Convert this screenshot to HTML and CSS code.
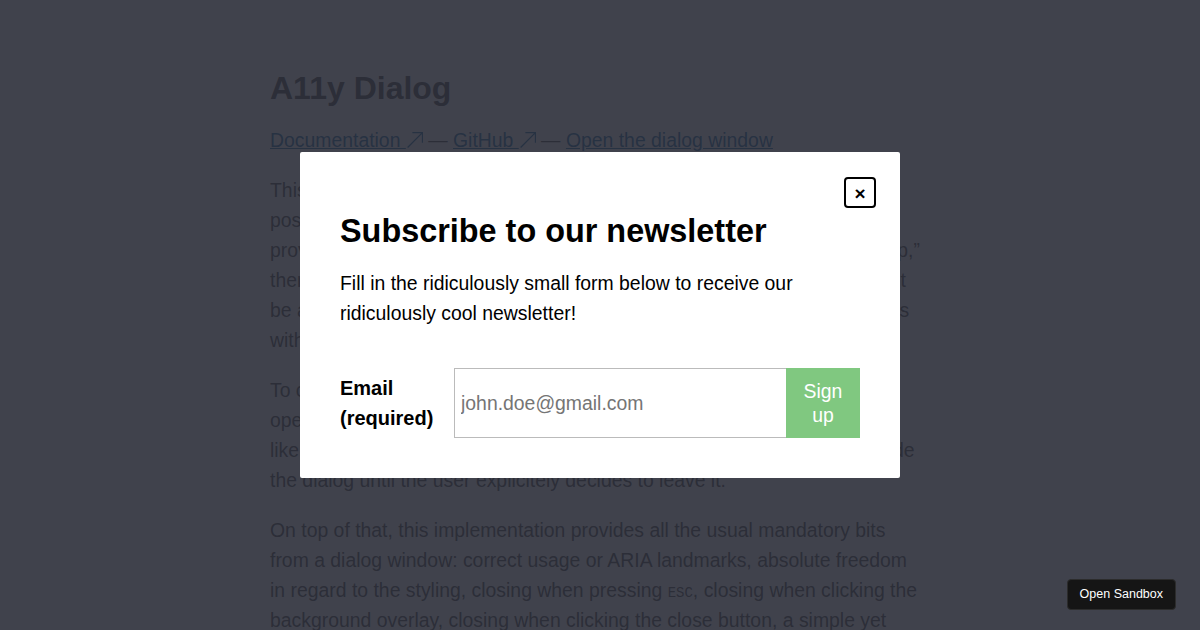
FILE: index.html
```html
<!DOCTYPE html>
<html lang="en">
  <head>
    <meta charset="UTF-8" />
    <meta name="viewport" content="width=device-width, initial-scale=1.0" />
    <title>A11y Dialog</title>
    <link rel="stylesheet" href="styles.css">
  </head>
  <body>
    <main class="page" id="main-content">
      <h1>A11y Dialog</h1>
      <p>
        <a href="#">Documentation <svg class="ext" viewBox="0 0 16 16" aria-hidden="true"><path d="M1.5 15.5 L15 2 M6 1.5 H15.5 V11" /></svg></a> —
        <a href="#">GitHub <svg class="ext" viewBox="0 0 16 16" aria-hidden="true"><path d="M1.5 15.5 L15 2 M6 1.5 H15.5 V11" /></svg></a> —
        <a href="#">Open the dialog window</a>
      </p>
      <p>
        This script aims at making dialog windows as accessible and usable as
        possible, while remaining very lightweight (about 1.6Kb once gzipped). It
        provides a solid base for any kind of dialog, whether a &ldquo;modal&rdquo; or a &ldquo;popup,&rdquo;
        therefore the accessibility part is handled, so that any dialog can simply sit
        be a regular part of the page, whatever your design or the content requires
        without ever getting in the way.
      </p>
      <p>
        To counter this, the main content is hidden from view when the dialog is
        open, and the keyboard focus is contained inside of it. It behaves exactly
        like a native modal would, so the user is never able to go anywhere outside
        the dialog until the user explicitely decides to leave it.
      </p>
      <p>
        On top of that, this implementation provides all the usual mandatory bits
        from a dialog window: correct usage or ARIA landmarks, absolute freedom
        in regard to the styling, closing when pressing <kbd>ESC</kbd>, closing when clicking the
        background overlay, closing when clicking the close button, a simple yet
        powerful JavaScript API, and a lot more.
      </p>
    </main>

    <div class="dialog-overlay">
      <div class="dialog" role="dialog" aria-labelledby="dialog-title">
        <button class="dialog-close" type="button" aria-label="Close this dialog window">&times;</button>
        <h2 id="dialog-title">Subscribe to our newsletter</h2>
        <p>
          Fill in the ridiculously small form below to receive our
          ridiculously cool newsletter!
        </p>
        <form class="signup">
          <label for="email">Email (required)</label>
          <div class="signup-field">
            <input type="email" id="email" name="email" placeholder="john.doe@gmail.com" />
            <button type="submit">Sign up</button>
          </div>
        </form>
      </div>
    </div>

    <a class="sandbox-btn" href="#">Open Sandbox</a>
  </body>
</html>
```

FILE: styles.css
```css
body {
  margin: 0;
  font-family: "Liberation Sans", Arial, sans-serif;
  font-size: 19.4px;
  line-height: 30px;
  color: #333;
  background: #fff;
  overflow: hidden;
}
.page {
  max-width: 660px;
  box-sizing: border-box;
  margin: 0 auto;
  padding: 69px 6px 0 0;
}
.page h1 {
  font-size: 32px;
  line-height: 1.2;
  margin: 0 0 18px;
}
.page p {
  margin: 0 0 20px;
}
.page a {
  color: #005a9c;
}
.ext {
  width: 17px;
  height: 17px;
  vertical-align: -1px;
  fill: none;
  stroke: currentColor;
  stroke-width: 1.2;
}
kbd {
  font-family: "Liberation Mono", monospace;
  font-size: 0.72em;
  line-height: 1;
}

.dialog-overlay {
  position: fixed;
  inset: 0;
  background-color: rgba(43, 46, 56, 0.9);
  display: flex;
  justify-content: center;
  align-items: center;
}
.dialog {
  position: relative;
  width: 600px;
  box-sizing: border-box;
  padding: 40px;
  background: #fff;
  border-radius: 2px;
  color: #000;
}
.dialog h2 {
  font-size: 32.4px;
  line-height: 1.2;
  margin: 20px 0 18px;
}
.dialog p {
  margin: 0 0 40px;
}
.dialog-close {
  position: absolute;
  top: 25px;
  right: 24px;
  width: 32px;
  height: 31px;
  padding: 2px 0 0;
  border: 2px solid #000;
  border-radius: 4px;
  background: #fff;
  font-family: "Liberation Sans", Arial, sans-serif;
  font-size: 19px;
  font-weight: bold;
  line-height: 1;
  color: #000;
}

.signup {
  display: flex;
  align-items: center;
}
.signup label {
  width: 95px;
  margin-right: 19px;
  font-size: 20px;
  font-weight: bold;
}
.signup-field {
  flex: 1;
  display: flex;
  height: 70px;
}
.signup-field input {
  flex: 1;
  min-width: 0;
  border: 1px solid #bbb;
  border-right: none;
  padding: 0 6px;
  font-family: inherit;
  font-size: 19.4px;
  color: #333;
}
.signup-field input::placeholder {
  color: #757575;
}
.signup-field button {
  width: 74px;
  border: none;
  background: #80c880;
  color: #fff;
  font-family: inherit;
  font-size: 19.4px;
  line-height: 24px;
  padding: 0 12px;
}

.sandbox-btn {
  position: fixed;
  right: 24px;
  bottom: 20px;
  height: 31px;
  box-sizing: border-box;
  padding: 0 12px;
  display: flex;
  align-items: center;
  background: #151515;
  border: 1px solid #2c2c2c;
  border-radius: 4px;
  color: #fff;
  font-size: 12.5px;
  line-height: 1;
  text-decoration: none;
}
```
